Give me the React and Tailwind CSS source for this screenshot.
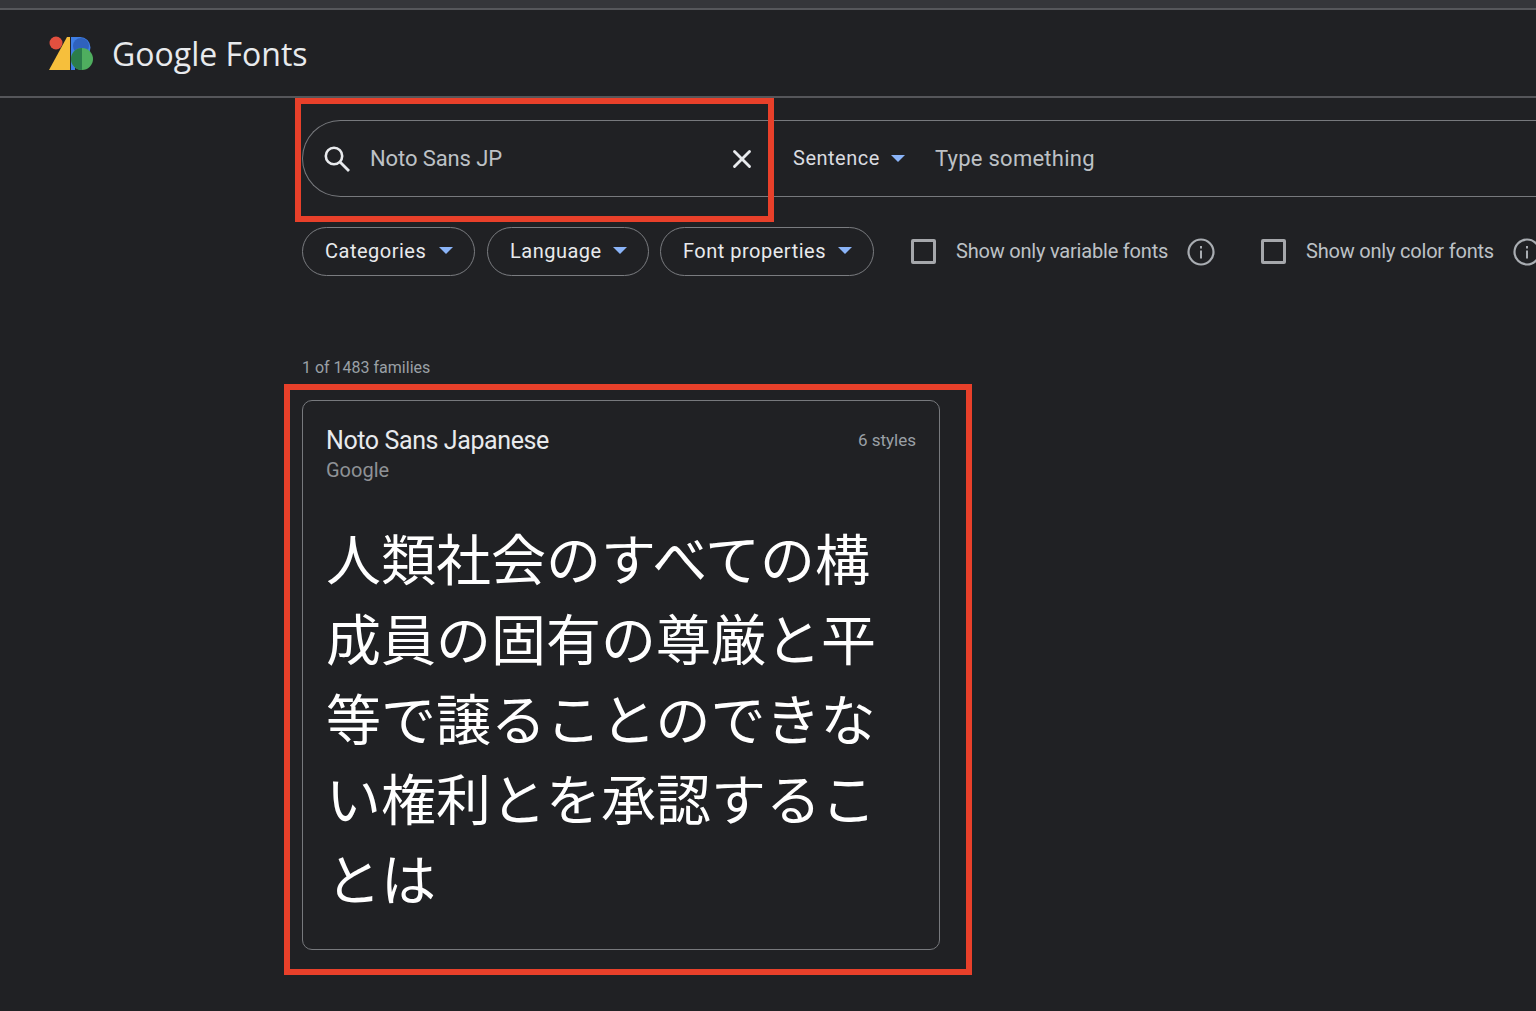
import { X } from "lucide-react";

const Caret = () => (
  <svg width="14" height="7" viewBox="0 0 14 7" className="shrink-0">
    <path d="M0 0h14L7 7z" fill="#8ab4f8" />
  </svg>
);

const Logo = () => (
  <svg width="46" height="36" viewBox="0 0 46 36" className="shrink-0">
    <circle cx="8" cy="8" r="6.500" fill="#e2503f" />
    <path d="M1 35 19 2h3v33z" fill="#f6bf3c" />
    <path d="M23 2h9a10.500 10.500 0 0 1 0 21h-5v12h-4z" fill="#3f7fe6" />
    <circle cx="33" cy="11" r="8" fill="#2f62bd" />
    <circle cx="34" cy="24" r="11" fill="#4fae5f" />
    <path d="M34 13a11 11 0 0 0 0 22z" fill="#2b7d4b" />
  </svg>
);

const SearchIcon = () => (
  <svg width="30" height="30" viewBox="0 0 30 30" fill="none" className="ml-[19px] shrink-0">
    <circle cx="12" cy="12" r="8.200" stroke="#e8eaed" strokeWidth="2.600" />
    <path d="M18 18l9 9" stroke="#e8eaed" strokeWidth="2.800" />
  </svg>
);

const InfoIcon = () => (
  <svg width="28" height="28" viewBox="0 0 28 28" fill="none" className="shrink-0">
    <circle cx="14" cy="14" r="12.500" stroke="#a9adb2" strokeWidth="2.200" />
    <rect x="13" y="12.500" width="2" height="8" fill="#a9adb2" />
    <rect x="13" y="8" width="2" height="2.500" fill="#a9adb2" />
  </svg>
);

const FilterPill = ({ label, width }) => (
  <button className={`flex h-[49px] shrink-0 items-center justify-between rounded-full border border-[#7a7c80] pb-[2px] pl-[22px] pr-[21px] text-[20px] tracking-[0.5px] text-[#e8eaed] ${width}`}>
    {label}
    <Caret />
  </button>
);

const ToggleOption = ({ label, boxMargin, labelWidth }) => (
  <div className={`flex shrink-0 items-center ${boxMargin}`}>
    <span className="h-[25px] w-[25px] shrink-0 rounded-[2px] border-[3px] border-[#a5a7ab]" />
    <span className={`ml-[20px] pb-[2px] text-[20px] tracking-[-0.2px] text-[#bdc1c6] ${labelWidth}`}>{label}</span>
    <InfoIcon />
  </div>
);

const sampleLines = [
  "人類社会のすべての構",
  "成員の固有の尊厳と平",
  "等で譲ることのできな",
  "い権利とを承認するこ",
  "とは",
];

export default function App() {
  return (
    <div className="relative h-[1011px] w-[1536px] overflow-hidden bg-[#202124] font-['Roboto','Noto_Sans_CJK_JP',sans-serif]">
      {/* Top strip */}
      <div className="h-[10px] border-b-2 border-[#56575b] bg-[#35363a]" />

      {/* Header */}
      <header className="flex h-[88px] items-center border-b-2 border-[#55565a] pl-[48px]">
        <Logo />
        <span className="ml-[18px] mt-[1px] font-['Open_Sans',sans-serif] text-[32px] font-medium text-[#e8eaed]">
          Google Fonts
        </span>
      </header>

      <main className="pl-[302px]">
        {/* Search row */}
        <div className="mt-[22px] flex h-[77px] w-[1300px] items-center rounded-l-full border border-r-0 border-[#77797d]">
          <SearchIcon />
          <span className="ml-[18px] w-[357px] text-[22px] tracking-[-0.1px] text-[#bdc1c6]">Noto Sans JP</span>
          <X size={30} strokeWidth={2.300} className="shrink-0 text-[#e8eaed]" />
          <div className="ml-[36px] flex w-[112px] shrink-0 items-center justify-between">
            <span className="pb-[2px] text-[20px] tracking-[0.5px] text-[#dadce0]">Sentence</span>
            <Caret />
          </div>
          <span className="ml-[30px] text-[22px] tracking-[0.25px] text-[#bdc1c6]">Type something</span>
        </div>

        {/* Filters */}
        <div className="mt-[30px] flex w-[1300px] items-center">
          <FilterPill label="Categories" width="w-[173px]" />
          <div className="ml-[12px]"><FilterPill label="Language" width="w-[162px]" /></div>
          <div className="ml-[11px]"><FilterPill label="Font properties" width="w-[214px]" /></div>
          <ToggleOption label="Show only variable fonts" boxMargin="ml-[37px]" labelWidth="w-[231px]" />
          <ToggleOption label="Show only color fonts" boxMargin="ml-[46px]" labelWidth="w-[207px]" />
        </div>

        <p className="mt-[81px] text-[16px] leading-[22px] text-[#9aa0a6]">1 of 1483 families</p>

        {/* Font card */}
        <article className="mt-[21px] h-[550px] w-[638px] rounded-[10px] border border-[#77797d] px-[23px] pt-[24px]">
          <div className="flex items-start justify-between">
            <div>
              <h2 className="text-[25px] leading-[32px] tracking-[-0.4px] text-[#e8eaed]">Noto Sans Japanese</h2>
              <p className="text-[20px] leading-[26px] text-[#8f9296]">Google</p>
            </div>
            <span className="pt-[4px] text-[17px] leading-[22px] text-[#9aa0a6]">6 styles</span>
          </div>
          <div className="mt-[33px] font-['Noto_Sans_CJK_JP',sans-serif] text-[55px] leading-[80px] text-white">
            {sampleLines.map((line) => (
              <div key={line} className="whitespace-nowrap">{line}</div>
            ))}
          </div>
        </article>
      </main>

      {/* Red annotation boxes */}
      <div className="absolute left-[295px] top-[98px] h-[124px] w-[479px] border-[6px] border-[#e8402a]" />
      <div className="absolute left-[284px] top-[384px] h-[591px] w-[688px] border-[6px] border-[#e8402a]" />
    </div>
  );
}
